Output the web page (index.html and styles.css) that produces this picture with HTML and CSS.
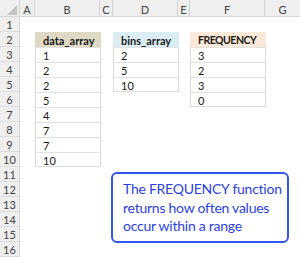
FILE: index.html
```html
<!DOCTYPE html>
<html>
<head>
<meta charset="utf-8">
<link rel="stylesheet" href="styles.css">
</head>
<body>
<div class="app">
  <div class="colheads">
    <div class="ch corner"><span class="tri"></span></div>
    <div class="ch w-a">A</div>
    <div class="ch w-b">B</div>
    <div class="ch w-c">C</div>
    <div class="ch w-d">D</div>
    <div class="ch w-e">E</div>
    <div class="ch w-f">F</div>
    <div class="ch w-g">G</div>
  </div>
  <div class="body">
    <div class="rowheads">
      <div class="rh">1</div><div class="rh">2</div><div class="rh">3</div><div class="rh">4</div>
      <div class="rh">5</div><div class="rh">6</div><div class="rh">7</div><div class="rh">8</div>
      <div class="rh">9</div><div class="rh">10</div><div class="rh">11</div><div class="rh">12</div>
      <div class="rh">13</div><div class="rh">14</div><div class="rh">15</div><div class="rh">16</div>
    </div>
    <div class="sheet">
      <div class="range range-data">
        <div class="cell head tan">data_array</div>
        <div class="cell">1</div>
        <div class="cell">2</div>
        <div class="cell">2</div>
        <div class="cell">5</div>
        <div class="cell">4</div>
        <div class="cell">7</div>
        <div class="cell">7</div>
        <div class="cell last">10</div>
      </div>
      <div class="range range-bins">
        <div class="cell head blue">bins_array</div>
        <div class="cell">2</div>
        <div class="cell">5</div>
        <div class="cell last">10</div>
      </div>
      <div class="range range-freq">
        <div class="cell head peach caps">FREQUENCY</div>
        <div class="cell">3</div>
        <div class="cell">2</div>
        <div class="cell">3</div>
        <div class="cell last">0</div>
      </div>
    </div>
  </div>
  <div class="callout">
    <span class="line">The FREQUENCY function</span>
    <span class="line">returns how often values</span>
    <span class="line">occur within a range</span>
  </div>
</div>
</body>
</html>
```
FILE: styles.css
```css
* { box-sizing: border-box; }
html, body { margin: 0; padding: 0; background: #fff; }
body { font-family: Lato, "Open Sans", sans-serif; width: 300px; height: 257px; overflow: hidden; }
.app { position: relative; width: 300px; height: 257px; }

.colheads { display: flex; height: 17px; background: #efefef; border-bottom: 1px solid #d6d6d6; }
.ch { height: 17px; border-right: 1px solid #d4d4d4; font-size: 11px; color: #444; display: flex; align-items: center; justify-content: center; padding-top: 1px; }
.corner { width: 20px; position: relative; border-right: 1px solid #d4d4d4; }
.tri { position: absolute; right: 2px; bottom: 2px; width: 0; height: 0; border-left: 10px solid transparent; border-bottom: 10px solid #c4c4c4; }
.w-a { width: 15px; }
.w-b { width: 65px; }
.w-c { width: 13px; }
.w-d { width: 65px; }
.w-e { width: 12px; }
.w-f { width: 75px; }
.w-g { width: 35px; border-right: none; }

.body { display: flex; }
.rowheads { width: 20px; display: flex; flex-direction: column; background: #efefef; border-right: 1px solid #d4d4d4; }
.rh { height: 15px; font-size: 11px; color: #444; display: flex; align-items: center; justify-content: center; border-bottom: 1px solid #dcdcdc; padding-top: 1px; }

.sheet { display: grid; grid-template-columns: 15px 65px 13px 65px 12px 75px 35px; grid-template-rows: repeat(16, 15px); }
.range { display: flex; flex-direction: column; border: 1px solid #dadada; border-top: none; margin-right: -1px; }
.range-data { grid-column: 2; grid-row: 2 / span 9; }
.range-bins { grid-column: 4; grid-row: 2 / span 4; }
.range-freq { grid-column: 6; grid-row: 2 / span 5; }
.cell { height: 15px; flex: none; font-size: 11px; color: #1a1a1a; padding-left: 7px; padding-top: 1px; display: flex; align-items: center; border-bottom: 1px solid #e2e2e2; white-space: nowrap; }
.cell.last { border-bottom: none; height: 14px; }
.head { font-weight: bold; height: 16px; margin-left: -1px; margin-right: -1px; padding-left: 8px; }
.caps { font-size: 10.5px; letter-spacing: -0.5px; }
.tan { background: #ddd9c4; }
.blue { background: #daeef3; }
.peach { background: #fde9d9; }

.callout { position: absolute; left: 111px; top: 172px; width: 178px; height: 71px; border: 2px solid #3355f0; border-radius: 6px; background: #fff; color: #2b3fe0; font-size: 14px; line-height: 18.5px; padding: 6px 0 0 10px; display: flex; flex-direction: column; }
.line { white-space: nowrap; letter-spacing: -0.25px; }
```
